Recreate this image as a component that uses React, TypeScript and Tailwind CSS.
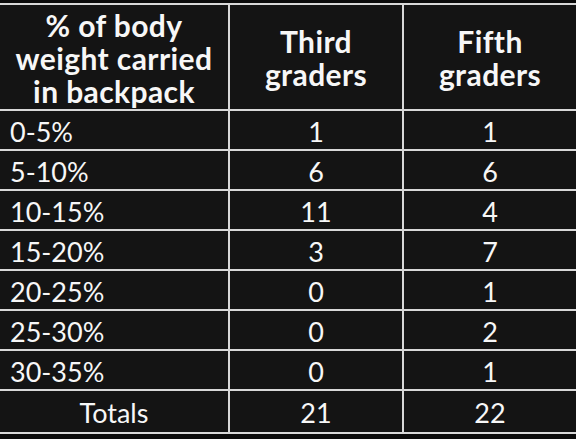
const rows = [
  { range: '0-5%', third: '1', fifth: '1' },
  { range: '5-10%', third: '6', fifth: '6' },
  { range: '10-15%', third: '11', fifth: '4' },
  { range: '15-20%', third: '3', fifth: '7' },
  { range: '20-25%', third: '0', fifth: '1' },
  { range: '25-30%', third: '0', fifth: '2' },
  { range: '30-35%', third: '0', fifth: '1' },
];

const App = () => {
  return (
    <div className="h-[439px] w-[576px] bg-[#0b0b0b] pt-[3px] text-[#f7f7f7] font-['Lato','Liberation_Sans',sans-serif]">
      <div className="bg-[#141414] border-y-2 border-[#d8d8d8]">
        {/* Header */}
        <div className="flex h-[106px] border-b-2 border-[#d8d8d8] font-bold text-[30px] leading-[33px] tracking-[0.4px]">
          <div className="w-[230px] border-r-2 border-[#d8d8d8] flex items-center justify-center text-center pt-[2px]">
            % of body<br />weight carried<br />in backpack
          </div>
          <div className="w-[174px] border-r-2 border-[#d8d8d8] flex items-center justify-center text-center pt-[2px]">
            Third<br />graders
          </div>
          <div className="flex-1 flex items-center justify-center text-center pt-[2px]">
            Fifth<br />graders
          </div>
        </div>

        {/* Body rows */}
        {rows.map((r) => (
          <div key={r.range} className="flex h-[40px] border-b-2 border-[#d8d8d8] text-[27px]">
            <div className="w-[230px] border-r-2 border-[#d8d8d8] flex items-center pl-[10px] pt-[4px]">{r.range}</div>
            <div className="w-[174px] border-r-2 border-[#d8d8d8] flex items-center justify-center pt-[4px]">{r.third}</div>
            <div className="flex-1 flex items-center justify-center pt-[4px]">{r.fifth}</div>
          </div>
        ))}

        {/* Totals */}
        <div className="flex h-[41px] text-[27px]">
          <div className="w-[230px] border-r-2 border-[#d8d8d8] flex items-center justify-center pt-[4px]">Totals</div>
          <div className="w-[174px] border-r-2 border-[#d8d8d8] flex items-center justify-center pt-[4px]">21</div>
          <div className="flex-1 flex items-center justify-center pt-[4px]">22</div>
        </div>
      </div>
    </div>
  );
};

export default App;
